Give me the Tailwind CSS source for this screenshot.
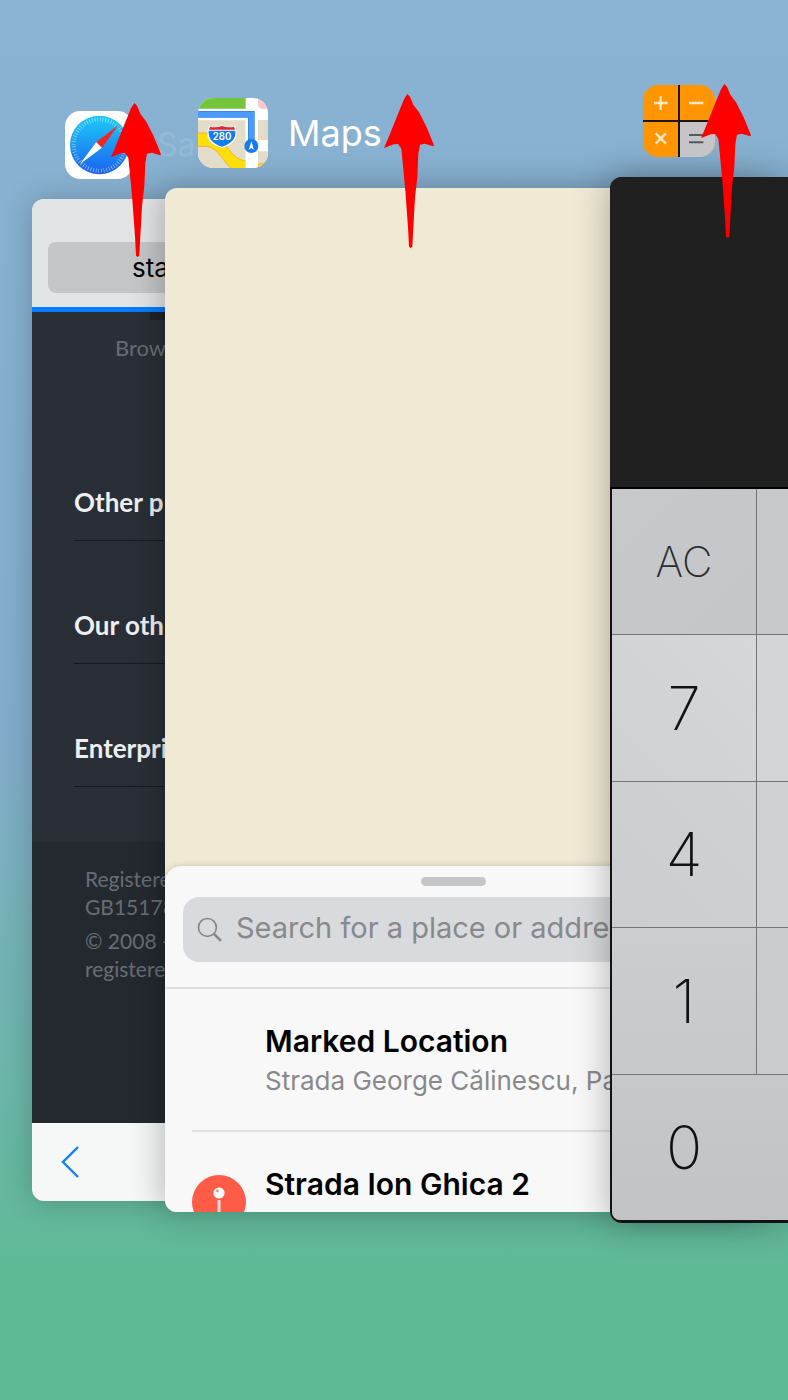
<!DOCTYPE html>
<html lang="en">
<head>
    <meta charset="utf-8">
    <meta name="viewport" content="width=device-width, initial-scale=1">
    <title>App switcher</title>
    <script src="https://cdn.jsdelivr.net/npm/@tailwindcss/browser@4"></script>
</head>
<body class="min-h-screen overflow-x-hidden bg-linear-to-b from-[#8ab3d3] from-0% via-[#82accb] via-52% to-[#5dba94] to-92% font-['Inter','Liberation_Sans',sans-serif]">
    <svg class="hidden">
        <symbol id="arrow" viewBox="0 0 150 462">
            <path fill="#fe0000" d="M70 0 L78 8 L88 32 L106 56 L128 100 L150 154 L148 157 L122 149 L108 152 L103 180 L100 250 L93 310 L88 400 L85 458 L80 462 L75 458 L72 400 L64 290 L56 205 L52 164 L42 150 L30 151 L0 162 L12 134 L38 70 L60 16 Z"/>
        </symbol>
    </svg>
    <main class="grid grid-cols-[133fr_445fr_178fr] items-start overflow-hidden pl-8 pb-20">

        <!--Safari-->
        <section class="relative min-w-0 pt-[111px]">
            <header class="flex items-center gap-6 pl-[33px] whitespace-nowrap">
                <svg class="size-[68px] shrink-0" viewBox="0 0 204 204">
                    <defs>
                        <linearGradient id="sky" x1="0" y1="0" x2="0" y2="1">
                            <stop offset="0" stop-color="#1dcbf8"/>
                            <stop offset="1" stop-color="#1c62ef"/>
                        </linearGradient>
                    </defs>
                    <rect width="204" height="204" rx="46" fill="#fff"/>
                    <circle cx="103" cy="102" r="88" fill="url(#sky)"/>
                    <circle cx="103" cy="102" r="77" fill="none" stroke="#fff" stroke-opacity=".6" stroke-width="12" stroke-dasharray="2 6.06"/>
                    <path fill="#fff" d="M45 159 L94 93 L111 110 Z"/>
                    <path fill="#f5251f" d="M160 43 L94 93 L111 110 Z"/>
                </svg>
                <h2 class="text-[32px] leading-10 text-white/10">Sa</h2>
            </header>
            <article class="mt-5 w-[115%] overflow-hidden rounded-xl bg-[#f6f7f7] whitespace-nowrap shadow-[0_0_30px_rgba(0,0,0,0.22)]">
                <div class="h-[108px] bg-[#e3e4e5] pt-[43px] pl-4">
                    <input type="text" value="sta" readonly aria-label="Address" class="h-[51px] w-full rounded-lg bg-[#c5c6c8] pl-[84px] text-[26px] text-black outline-none">
                </div>
                <div class="h-[5px] bg-[#067bfd]"></div>
                <div class="h-[530px] bg-[#2a2e36] pl-[42px] font-['Lato','Liberation_Sans',sans-serif]">
                    <div class="ml-[76px] h-2 w-8 bg-[#1f2329]"></div>
                    <p class="pt-3 pl-[41px] text-[22px] leading-8 text-[#686d75]">Brow</p>
                    <ul class="pt-[106px] text-[26px] leading-8 font-bold text-[#eeeff0]">
                        <li class="mt-4 h-[55px] border-b border-[#17191c]">Other p</li>
                        <li class="mt-[68px] h-[55px] border-b border-[#17191c]">Our oth</li>
                        <li class="mt-[68px] h-[55px] border-b border-[#17191c]">Enterpri</li>
                    </ul>
                </div>
                <div class="h-[281px] bg-[#242930] pt-[23px] pl-[53px] font-['Lato','Liberation_Sans',sans-serif] text-[21px] leading-7 text-[#686d75]">
                    <p>Registere<br>GB151788</p>
                    <p class="mt-[6px]">© 2008 -<br>registere</p>
                </div>
                <div class="flex h-[78px] items-center pl-7">
                    <button aria-label="Back">
                        <svg class="h-8 w-5" viewBox="0 0 20 32" fill="none" stroke="#0f80fb" stroke-width="2.4">
                            <path d="M18 1 L3 16 L18 31"/>
                        </svg>
                    </button>
                </div>
            </article>
            <svg class="absolute top-[103px] left-[79px] h-[154px] w-[50px]"><use href="#arrow"/></svg>
        </section>

        <!--Maps-->
        <section class="relative min-w-0 pt-[98px]">
            <header class="flex items-center gap-5 pl-[33px] whitespace-nowrap">
                <svg class="size-[70px] shrink-0" viewBox="0 0 210 210">
                    <defs>
                        <clipPath id="tile"><rect width="210" height="210" rx="46"/></clipPath>
                    </defs>
                    <g clip-path="url(#tile)">
                        <rect width="210" height="210" fill="#fff"/>
                        <path fill="#75c43a" d="M0 0H143V32H0Z"/>
                        <path fill="#fbc7ca" d="M180 0H210V32H194Q180 32 180 18Z"/>
                        <path fill="#e2dcc9" d="M0 67H143V210H0ZM180 66H210V126H180ZM180 160H210V210H180Z"/>
                        <path fill="#fddd0a" stroke="#f3b32d" stroke-width="3" d="M-4 105H28C70 108 82 150 108 172C122 184 134 188 147 190V214H104C78 198 64 152 28 145H-4ZM180 200L214 190V214H180Z"/>
                        <path fill="#fff" d="M143 60H180V210H143Z"/>
                        <path fill="none" stroke="#2b7de8" stroke-width="20" d="M0 49H160V130"/>
                        <path fill="none" stroke="#4a9bff" stroke-width="16" d="M0 49H160V130"/>
                        <circle cx="160" cy="144" r="21" fill="#147cf3"/>
                        <path fill="#fff" d="M160 130L168 156L160 150L152 156Z"/>
                        <path fill="#fff" d="M32 84Q52 90 72 81Q92 90 112 84Q118 100 115 118Q108 140 72 150Q36 140 29 118Q26 100 32 84Z"/>
                        <path fill="#e3232d" d="M36 86Q54 90 72 84Q90 90 108 86L111 95H33Z"/>
                        <path fill="#147cf3" d="M32 98H112Q116 132 72 146Q28 132 32 98Z"/>
                        <text x="72" y="126" text-anchor="middle" font-size="29" font-weight="600" fill="#fff">280</text>
                    </g>
                </svg>
                <h2 class="text-[36px] leading-10 text-white">Maps</h2>
            </header>
            <article class="mt-5 w-[130%] overflow-hidden rounded-xl bg-[#f0ead5] whitespace-nowrap shadow-[0_0_36px_rgba(0,0,0,0.3)]">
                <div class="h-[678px]"></div>
                <div class="h-[346px] overflow-hidden rounded-t-2xl bg-[#f8f8f8] shadow-[0_0_6px_rgba(0,0,0,0.2)]">
                    <div class="mt-[11px] ml-64 h-[9px] w-[65px] rounded-full bg-[#c4c5c7]"></div>
                    <label class="mt-[11px] ml-[18px] flex h-[65px] items-center gap-[14px] rounded-2xl bg-[#d9dadd] pl-[14px]">
                        <svg class="size-[25px] shrink-0" viewBox="0 0 24 24" fill="none" stroke="#85868a" stroke-width="1.6">
                            <circle cx="10" cy="10" r="8.6"/>
                            <path stroke-width="2.4" d="M16 16L23 23"/>
                        </svg>
                        <input type="search" placeholder="Search for a place or addre" aria-label="Search for a place or address" class="mb-1 w-full bg-transparent text-[29px] outline-none placeholder:text-[#88898c]">
                    </label>
                    <ul class="mt-[25px] border-t-2 border-[#e0e1e2]">
                        <li class="ml-[27px] h-[143px] border-b-2 border-[#e0e1e2] pt-8 pl-[73px]">
                            <h3 class="text-[30px] leading-10 font-semibold text-black">Marked Location</h3>
                            <p class="text-[26px] leading-10 text-[#88898c]">Strada George Călinescu, Pa</p>
                        </li>
                        <li class="flex items-start gap-[19px] pt-8 pl-[27px]">
                            <svg class="mt-[11px] size-[54px] shrink-0" viewBox="0 0 54 54">
                                <circle cx="27" cy="27" r="27" fill="#ff5c48"/>
                                <path stroke="#fff" stroke-opacity=".8" stroke-width="3" d="M27 25V42"/>
                                <circle cx="27" cy="18" r="5.6" fill="#fff"/>
                                <circle cx="25.4" cy="16" r="1.4" fill="#ff8a7a"/>
                            </svg>
                            <h3 class="text-[30px] leading-10 font-semibold text-black">Strada Ion Ghica 2</h3>
                        </li>
                    </ul>
                </div>
            </article>
            <svg class="absolute top-[94px] left-[219px] h-[154px] w-[50px]"><use href="#arrow"/></svg>
        </section>

        <!--Calculator-->
        <section class="relative min-w-0 pt-[85px]">
            <header class="pl-[33px]">
                <svg class="size-[72px]" viewBox="0 0 216 216">
                    <defs>
                        <clipPath id="keys"><rect width="216" height="216" rx="46"/></clipPath>
                    </defs>
                    <g clip-path="url(#keys)">
                        <rect width="216" height="216" fill="#ff9500"/>
                        <rect x="108" y="108" width="108" height="108" fill="#c5c5c9"/>
                        <path stroke="#1c1408" stroke-width="6" d="M108 0V216M0 108H216"/>
                        <path stroke="#ffe9c8" stroke-width="7" d="M33 54H74M53 34V75M138 54H181M38 145L69 176M69 145L38 176"/>
                        <path stroke="#59595b" stroke-width="6" d="M138 150H181M138 172H181"/>
                    </g>
                </svg>
            </header>
            <article class="mt-5 overflow-hidden rounded-l-xl bg-[#121314] pb-[3px] shadow-[0_0_36px_rgba(0,0,0,0.3)]">
                <div class="h-[312px] border-b-2 border-black bg-[#202020]"></div>
                <div class="ml-[2px] grid h-[731px] grid-cols-[144fr_31fr] grid-rows-5 gap-px overflow-hidden rounded-bl-lg bg-[#747577] text-[60px] font-extralight text-[#111214]">
                    <button class="bg-linear-to-br from-[#c7c8ca] to-[#c5c6ca] text-[42px] text-[#2c2d30]">AC</button>
                    <button aria-label="Plus or minus" class="bg-[#c7c8cc]"></button>
                    <button class="bg-linear-to-bl from-[#d6d7d9] to-[#cfd0d3]">7</button>
                    <button aria-label="8" class="bg-[#d4d5d7]"></button>
                    <button class="bg-linear-to-bl from-[#d0d1d4] to-[#cccdd1]">4</button>
                    <button aria-label="5" class="bg-[#d0d1d4]"></button>
                    <button class="bg-linear-to-b from-[#cccdd1] to-[#c7c8cb]">1</button>
                    <button aria-label="2" class="bg-[#cbccd0]"></button>
                    <button class="col-span-2 bg-linear-to-b from-[#c7c8cb] to-[#c2c3c5] pr-8">0</button>
                </div>
            </article>
            <svg class="absolute top-[84px] left-[91px] h-[154px] w-[50px]"><use href="#arrow"/></svg>
        </section>
    </main>
</body>
</html>
